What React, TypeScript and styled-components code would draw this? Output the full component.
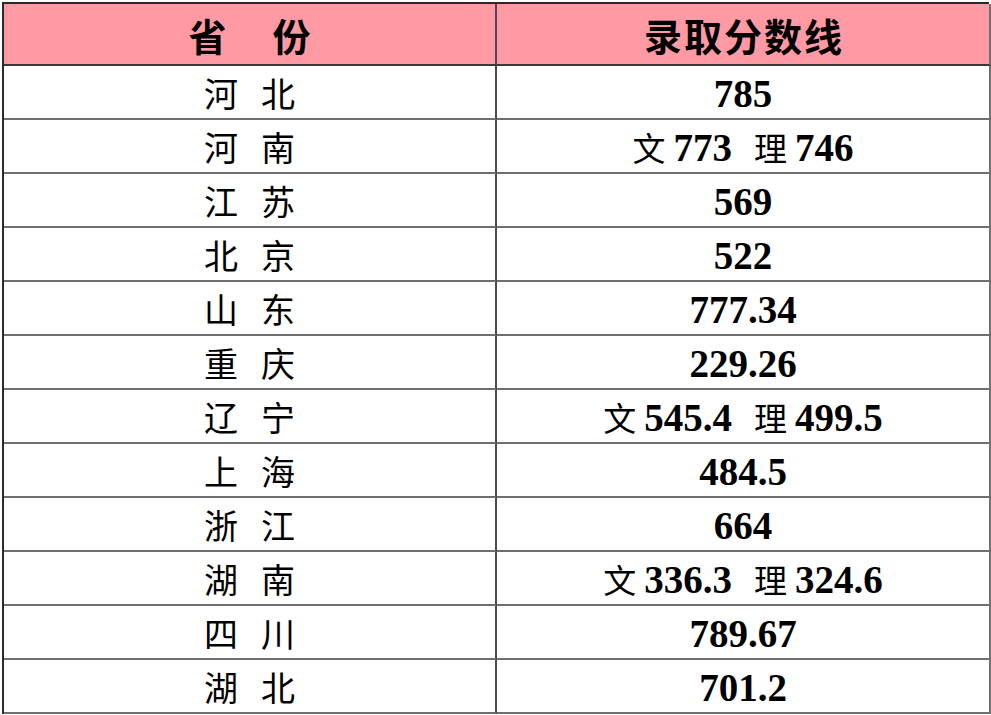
import React from "react";
import styled, { createGlobalStyle } from "styled-components";

const Global = createGlobalStyle`
  html, body { margin: 0; padding: 0; background: #ffffff; }
  body { padding: 2px 0 0 2px; }
`;

const Table = styled.div`
  display: grid;
  grid-template-columns: 493px 494px;
  width: 987px;
  border-top: 2px solid #2a2a2a;
  border-left: 2px solid #2a2a2a;
  box-sizing: border-box;
`;

const Cell = styled.div<{ $head?: boolean; $right?: boolean }>`
  height: ${(p) => (p.$head ? "62px" : "54px")};
  box-sizing: border-box;
  display: flex;
  align-items: center;
  justify-content: center;
  background: ${(p) => (p.$head ? "#ff99a4" : "#ffffff")};
  border-bottom: 2px solid ${(p) => (p.$head ? "#3a3a3a" : "#6e6e6e")};
  border-right: 2px solid ${(p) => (p.$right ? "#707070" : "#4a4a4a")};
  color: #000;
  white-space: pre;
`;

const HeadText = styled.span<{ $gap: number }>`
  font-family: "Noto Sans CJK SC", sans-serif;
  font-weight: 700;
  font-size: 38px;
  line-height: 1;
  letter-spacing: ${(p) => p.$gap}px;
  margin-right: ${(p) => -p.$gap}px;
  padding-top: 2px;
`;

const Province = styled.span`
  font-family: "Noto Sans CJK SC", sans-serif;
  font-size: 34px;
  font-weight: 400;
  line-height: 1;
  letter-spacing: 23px;
  margin-right: -23px;
  padding-top: 2px;
`;

const Score = styled.span`
  display: flex;
  align-items: baseline;
  font-family: "Liberation Serif", "Times New Roman", serif;
  font-weight: 700;
  font-size: 39px;
  line-height: 1;
  padding-top: 3px;
`;

const Tag = styled.span`
  font-family: "Noto Sans CJK SC", sans-serif;
  font-weight: 400;
  font-size: 33px;
  margin-right: 8px;
`;

const Sep = styled.span`
  display: inline-block;
  width: 22px;
`;

type Row = { p: string; s: string | [string, string] };

const rows: Row[] = [
  { p: "河北", s: "785" },
  { p: "河南", s: ["773", "746"] },
  { p: "江苏", s: "569" },
  { p: "北京", s: "522" },
  { p: "山东", s: "777.34" },
  { p: "重庆", s: "229.26" },
  { p: "辽宁", s: ["545.4", "499.5"] },
  { p: "上海", s: "484.5" },
  { p: "浙江", s: "664" },
  { p: "湖南", s: ["336.3", "324.6"] },
  { p: "四川", s: "789.67" },
  { p: "湖北", s: "701.2" },
];

export default function App() {
  return (
    <>
      <Global />
      <Table>
        <Cell $head>
          <HeadText $gap={46}>省份</HeadText>
        </Cell>
        <Cell $head $right>
          <HeadText $gap={2}>录取分数线</HeadText>
        </Cell>
        {rows.map((r) => (
          <React.Fragment key={r.p}>
            <Cell>
              <Province>{r.p}</Province>
            </Cell>
            <Cell $right>
              {typeof r.s === "string" ? (
                <Score>{r.s}</Score>
              ) : (
                <Score>
                  <Tag>文</Tag>
                  {r.s[0]}
                  <Sep />
                  <Tag>理</Tag>
                  {r.s[1]}
                </Score>
              )}
            </Cell>
          </React.Fragment>
        ))}
      </Table>
    </>
  );
}
